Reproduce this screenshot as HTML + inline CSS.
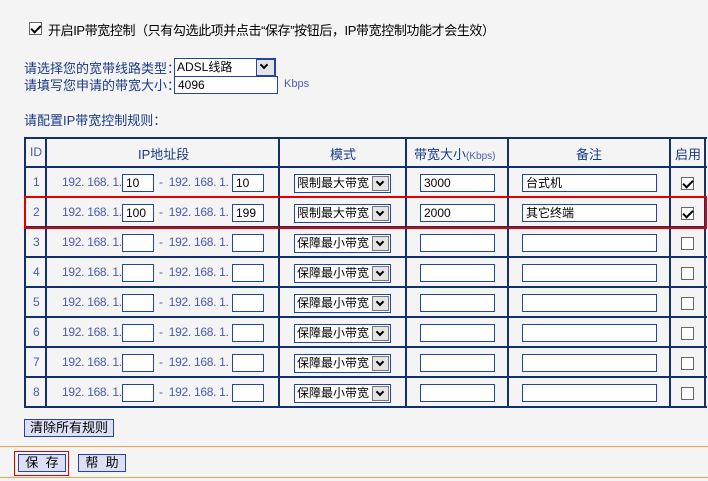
<!DOCTYPE html><html><head><meta charset="utf-8"><style>
body{margin:0;width:708px;height:481px;background:#f4f4f4;position:relative;overflow:hidden;font-family:"Liberation Sans","Noto Sans CJK SC",sans-serif;font-size:13px;color:#1a3a8a}
.a{position:absolute;white-space:nowrap}
.h{position:absolute;background:#13306e;height:2px;left:24px;width:683px}
.v{position:absolute;background:#13306e;width:2px;top:138px;height:271px}
.in{position:absolute;height:16px;border:1px solid #2544a0;background:#fff;font-size:12px;line-height:16px;color:#000;padding-left:3px;box-sizing:content-box}
.sel{position:absolute;height:17px;border:1px solid #2544a0;background:#fff;font-size:12px;line-height:17px;color:#000;padding-left:2px;overflow:hidden}
.sel i{position:absolute;right:1px;top:1px;width:17px;height:15px;background:#e4e4e4;border:1px solid #777;box-sizing:border-box}
.sel i:after{content:"";position:absolute;left:4px;top:2px;width:4px;height:4px;border-right:2px solid #000;border-bottom:2px solid #000;transform:rotate(45deg)}
.cb{position:absolute;width:11px;height:11px;border:1px solid #666;background:#fff}
.cb.k:after{content:"";position:absolute;left:3px;top:0px;width:4px;height:8px;border-right:2px solid #000;border-bottom:2px solid #000;transform:rotate(45deg)}
.ip{color:#4a5ab0;font-size:12px}
.ipa{letter-spacing:-0.3px}
.btn{position:absolute;height:16px;border:1px solid #2544a0;background:#dde0f4;color:#000;font-size:13px;line-height:16px;text-align:center}
</style></head><body>
<div class="cb k" style="left:29px;top:22px"></div>
<div class="a" style="left:48px;top:20px;color:#000;letter-spacing:-0.4px">开启IP带宽控制（只有勾选此项并点击“保存”按钮后，IP带宽控制功能才会生效）</div>
<div class="a" style="left:24px;top:58px">请选择您的宽带线路类型：</div>
<div class="a" style="left:24px;top:75px">请填写您申请的带宽大小：</div>
<div class="sel" style="left:174px;top:58px;width:98px">ADSL线路<i style="width:19px;height:17px;top:0;right:0;border-color:#2544a0"></i></div>
<div class="in" style="left:174px;top:76px;width:99px">4096</div>
<div class="a" style="left:284px;top:78px;font-size:11px;color:#4a5ab0">Kbps</div>
<div class="a" style="left:24px;top:110px">请配置IP带宽控制规则：</div>
<div class="h" style="top:137px"></div><div class="h" style="top:166px"></div>
<div class="h" style="top:196px"></div><div class="h" style="top:226px"></div><div class="h" style="top:256px"></div><div class="h" style="top:286px"></div><div class="h" style="top:316px"></div><div class="h" style="top:346px"></div><div class="h" style="top:376px"></div><div class="h" style="top:406px"></div>
<div class="v" style="left:24px;top:137px"></div><div class="v" style="left:45px;top:137px"></div><div class="v" style="left:278px;top:137px"></div><div class="v" style="left:405px;top:137px"></div><div class="v" style="left:507px;top:137px"></div><div class="v" style="left:669px;top:137px"></div><div class="v" style="left:704px;top:137px"></div>
<div class="a ip" style="left:30px;top:145px">ID</div>
<div class="a" style="left:138px;top:144px">IP地址段</div>
<div class="a" style="left:330px;top:144px">模式</div>
<div class="a" style="left:414px;top:144px">带宽大小<span style="font-size:10px;color:#4a5ab0">(Kbps)</span></div>
<div class="a" style="left:576px;top:144px">备注</div>
<div class="a" style="left:675px;top:144px">启用</div>
<div id="rows"></div>
<div class="a" style="left:24px;top:196px;width:679px;height:29px;border:2px solid #e00000"></div>
<div class="btn" style="left:24px;top:419px;width:88px">清除所有规则</div>
<div class="a" style="left:0;top:446px;width:708px;height:1px;background:#f0a050"></div>
<div class="a" style="left:0;top:477px;width:708px;height:1px;background:#f0a050"></div>
<div class="a" style="left:14px;top:451px;width:53px;height:23px;border:1px solid #e00000"></div>
<div class="btn" style="left:18px;top:454px;width:46px">保&nbsp;&nbsp;存</div>
<div class="btn" style="left:78px;top:454px;width:46px">帮&nbsp;&nbsp;助</div>
<script>
var d=[["10","10","限制最大带宽","3000","台式机",1],["100","199","限制最大带宽","2000","其它终端",1]];
var h="";
for(var i=0;i<8;i++){var y=167+i*30,r=d[i]||["","","保障最小带宽","","",0];
h+='<div class="a ip" style="left:33px;top:'+(y+8)+'px">'+(i+1)+'</div>';
h+='<div class="a ip ipa" style="left:62px;top:'+(y+8)+'px">192.&nbsp;168.&nbsp;1.</div>';
h+='<div class="in" style="left:122px;top:'+(y+7)+'px;width:27px">'+r[0]+'</div>';
h+='<div class="a ip ipa" style="left:159px;top:'+(y+8)+'px">-&nbsp;&nbsp;192.&nbsp;168.&nbsp;1.</div>';
h+='<div class="in" style="left:232px;top:'+(y+7)+'px;width:27px">'+r[1]+'</div>';
h+='<div class="sel" style="left:294px;top:'+(y+7)+'px;width:93px">'+r[2]+'<i></i></div>';
h+='<div class="in" style="left:420px;top:'+(y+7)+'px;width:70px">'+r[3]+'</div>';
h+='<div class="in" style="left:522px;top:'+(y+7)+'px;width:130px">'+r[4]+'</div>';
h+='<div class="cb'+(r[5]?' k':'')+'" style="left:681px;top:'+(y+10)+'px"></div>';}
document.getElementById("rows").innerHTML=h;
</script>
</body></html>
